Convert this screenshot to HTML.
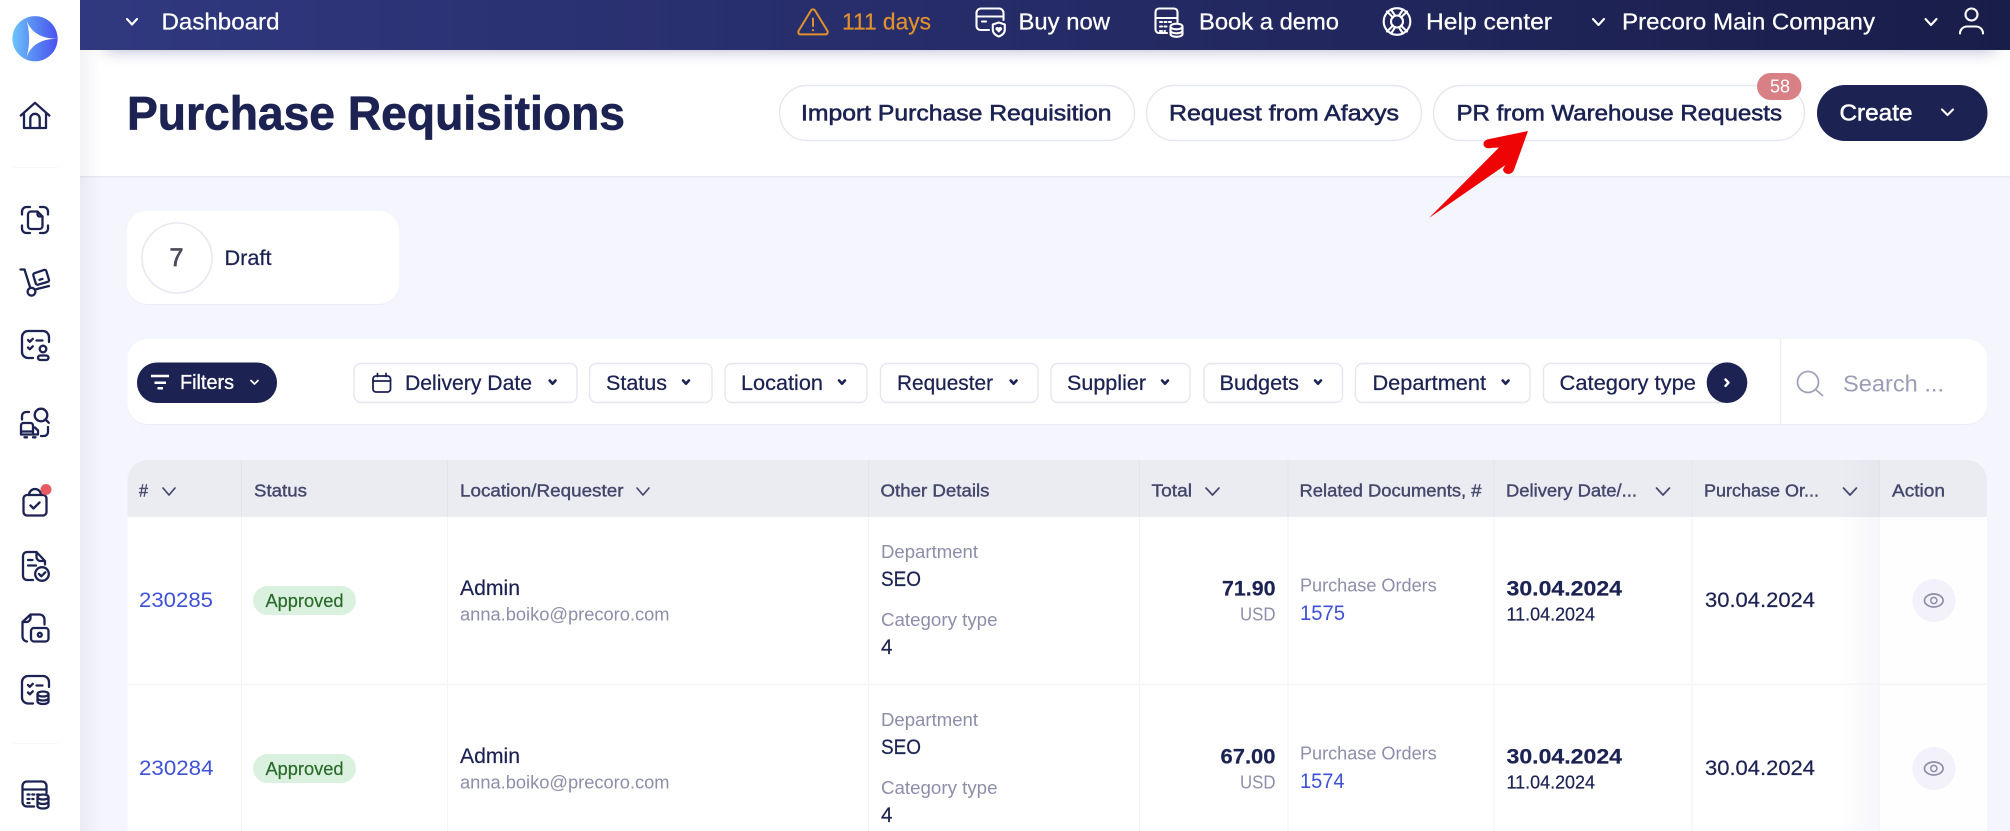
<!DOCTYPE html>
<html lang="en">
<head>
<meta charset="utf-8">
<title>Purchase Requisitions</title>
<style>
html,body{margin:0;padding:0;background:#f5f6fd;overflow:hidden}
svg{display:block}
text{font-family:"Liberation Sans",Arial,sans-serif;white-space:pre}
.w{fill:#fff;stroke:#fff;stroke-width:.25;font-size:23px}
.n{fill:#1c2252}
.btn{fill:#1c2252;stroke:#1c2252;stroke-width:.6;font-size:22.5px}
.chip{fill:#1c2252;stroke:#1c2252;stroke-width:.25;font-size:21.5px}
.th{fill:#44476b;stroke:#44476b;stroke-width:.4;font-size:17.5px}
.g{fill:#8c8eaa;font-size:18.3px}
.v{fill:#1c2252;stroke:#1c2252;stroke-width:.2;font-size:21px}
.b{fill:#1c2252;stroke:#1c2252;stroke-width:.2;font-weight:bold;font-size:21.5px}
.l{fill:#3f51d6;font-size:21.5px}
.ok{fill:#2a6a2a;stroke:#2a6a2a;stroke-width:.2;font-size:18.3px}
.ic{fill:none;stroke:#1c2252;stroke-width:2.3;stroke-linecap:round;stroke-linejoin:round}
.wi{fill:none;stroke:#fff;stroke-width:2.1;stroke-linecap:round;stroke-linejoin:round}
.chv{fill:none;stroke:#1c2252;stroke-width:1.8;stroke-linecap:round;stroke-linejoin:round}
.cc{fill:none;stroke:#1c2252;stroke-width:2.6;stroke-linecap:round;stroke-linejoin:round}
.hc{fill:none;stroke:#44476b;stroke-width:1.7;stroke-linecap:round;stroke-linejoin:round}
.chipbox{fill:#fff;stroke:#e5e6f0;stroke-width:1.4}
.pb{fill:#fff;stroke:#e6e7ee;stroke-width:1.4}
</style>
</head>
<body>
<svg xmlns="http://www.w3.org/2000/svg" width="2010" height="831" viewBox="0 0 2010 831">
<defs>
<linearGradient id="top" x1="0" x2="1" y1="0" y2="0"><stop offset="0" stop-color="#30387f"/><stop offset=".5" stop-color="#252b66"/><stop offset="1" stop-color="#191d49"/></linearGradient>
<linearGradient id="side" x1="0" x2="1" y1="0" y2="0"><stop offset="0" stop-color="#1c2252" stop-opacity=".055"/><stop offset="1" stop-color="#1c2252" stop-opacity="0"/></linearGradient>
<linearGradient id="logo" x1="0" x2="1" y1=".5" y2=".5"><stop offset="0" stop-color="#6cc4fb"/><stop offset=".45" stop-color="#5a8cf3"/><stop offset="1" stop-color="#4a52ef"/></linearGradient>
<linearGradient id="stick" x1="0" x2="1" y1="0" y2="0"><stop offset="0" stop-color="#f6f6fb" stop-opacity="0"/><stop offset="1" stop-color="#f6f6fb" stop-opacity="1"/></linearGradient>
<linearGradient id="stickh" x1="0" x2="1" y1="0" y2="0"><stop offset="0" stop-color="#e6e7ee" stop-opacity="0"/><stop offset="1" stop-color="#e6e7ee" stop-opacity="1"/></linearGradient>
<linearGradient id="red" x1="0" x2="1" y1="0" y2="1"><stop offset="0" stop-color="#e80000"/><stop offset="1" stop-color="#f40808"/></linearGradient>
<filter id="blur" x="-5%" y="-200%" width="110%" height="500%"><feGaussianBlur stdDeviation="8"/></filter>
<clipPath id="mainclip"><rect x="80" y="50" width="1930" height="781"/></clipPath>
</defs>

<rect width="2010" height="831" fill="#f5f6fd"/>
<rect x="80" y="50" width="1930" height="126" fill="#fff"/>
<rect x="80" y="176" width="1930" height="1.5" fill="#e8e9ef"/>
<rect x="80" y="50" width="22" height="781" fill="url(#side)"/>
<g clip-path="url(#mainclip)"><rect x="105" y="28" width="1890" height="22" fill="#1c2252" fill-opacity=".3" filter="url(#blur)"/></g>

<!-- top bar -->
<rect x="80" y="0" width="1930" height="50" fill="url(#top)"/>
<polyline points="127,19 132,24.5 137,19" class="wi"/>
<text x="161.5" y="29.5" class="w" textLength="118" lengthAdjust="spacingAndGlyphs">Dashboard</text>

<path d="M811 10.5a2.3 2.3 0 0 1 4 0L827.5 31a2.3 2.3 0 0 1-2 3.4H800.5a2.3 2.3 0 0 1-2-3.4Z M813 18.5v7.5 M813 30v.4" fill="none" stroke="#e0912d" stroke-width="2" stroke-linecap="round" stroke-linejoin="round"/>
<text x="842" y="29.5" font-size="23" fill="#e0912d" stroke="#e0912d" stroke-width=".2" textLength="89" lengthAdjust="spacingAndGlyphs">111 days</text>

<path class="wi" d="M989 30h-8.5a4 4 0 0 1-4-4V13a4.5 4.5 0 0 1 4.5-4.5h18a4.5 4.5 0 0 1 4.5 4.5v7 M976.5 16.5h26.5 M982 21.5h4"/>
<path class="wi" d="M998.8 22.5l6 2v5c0 3.5-2.500 5.700-6 7-3.500-1.300-6-3.500-6-7v-5Z"/>
<path d="M998.8 32.8l-3-3a1.800 1.800 0 0 1 3-2 1.800 1.800 0 0 1 3 2Z" fill="#fff"/>
<text x="1018.5" y="29.5" class="w" textLength="91.5" lengthAdjust="spacingAndGlyphs">Buy now</text>

<path class="wi" d="M1167 33h-8a3.500 3.500 0 0 1-3.500-3.500V12a3.500 3.500 0 0 1 3.500-3.500h15a3.500 3.500 0 0 1 3.500 3.500v10 M1155.500 18h22"/>
<path class="wi" stroke-dasharray="2 2.500" d="M1160 22h12 M1160 26.500h7 M1160 31h5"/>
<path class="wi" d="M1170.500 26.500c0-1.700 2.700-2.800 6-2.800s6 1.100 6 2.800v7.500c0 1.700-2.700 2.800-6 2.800s-6-1.100-6-2.800Z M1170.500 26.500c0 1.700 2.700 2.800 6 2.800s6-1.100 6-2.800 M1170.500 30.500c0 1.700 2.700 2.800 6 2.800s6-1.100 6-2.800"/>
<text x="1199" y="29.5" class="w" textLength="140" lengthAdjust="spacingAndGlyphs">Book a demo</text>

<g class="wi"><circle cx="1397" cy="21.5" r="13.300"/><circle cx="1397" cy="21.5" r="6"/><path d="M1387 11.500l6 6 M1391 9.500l4 6 M1407 11.500l-6 6 M1403 9.500l-4 6 M1387 31.500l6-6 M1391 33.500l4-6 M1407 31.500l-6-6 M1403 33.500l-4-6"/></g>
<text x="1426" y="29.5" class="w" textLength="126" lengthAdjust="spacingAndGlyphs">Help center</text>

<polyline points="1593,19 1598.5,25 1604,19" class="wi"/>
<text x="1622" y="29.5" class="w" textLength="253" lengthAdjust="spacingAndGlyphs">Precoro Main Company</text>
<polyline points="1925.5,19 1931,25 1936.5,19" class="wi"/>
<g class="wi"><circle cx="1971.5" cy="14.5" r="6"/><path d="M1960 33.500a7 7 0 0 1 7-7h9a7 7 0 0 1 7 7"/></g>

<!-- sidebar -->
<rect x="0" y="0" width="80" height="831" fill="#fff"/>
<circle cx="35" cy="38.7" r="22.6" fill="url(#logo)"/>
<path d="M25.300 16.500Q31 39 58 38.700Q31 38.400 25.300 61Q33 38.700 25.300 16.500Z" fill="#fff"/>
<rect x="13" y="167" width="45" height="1" fill="#f7f7fa"/>
<rect x="13" y="743" width="45" height="1" fill="#f7f7fa"/>

<g class="ic">
<path d="M20.800 115.500L35 102.800 49.300 115.500 M24 112.500V128h22V112.500 M30.300 128v-9.500a4.700 4.700 0 0 1 9.400 0V128"/>
<path d="M22 214.500v-3a4.500 4.500 0 0 1 4.500-4.500h3.500 M40 207h3.500a4.500 4.500 0 0 1 4.500 4.500v3 M48 225.500v3a4.500 4.500 0 0 1-4.500 4.500H40 M30 233h-3.500a4.500 4.500 0 0 1-4.500-4.500v-3"/>
<path d="M31 211.500h6.500l5 5v9.500a3 3 0 0 1-3 3H31a3 3 0 0 1-3-3v-11.500a3 3 0 0 1 3-3Z M37.500 211.500v3a2 2 0 0 0 2 2h3"/>
<path d="M20.500 269.500h4L30 287"/><circle cx="31.500" cy="291.700" r="3.900"/><path d="M36 289.300l13-3.300"/>
<path d="M34.500 273.200l9.500-3.300a1.800 1.800 0 0 1 2.300 1.200l2.600 8.500a1.800 1.800 0 0 1-1.200 2.300l-9.700 2.800a1.800 1.800 0 0 1-2.200-1.200l-2.500-8.200a1.800 1.800 0 0 1 1.200-2.100Z"/><path d="M39.500 279.800l3-.9"/>

<path d="M33 358h-5a6 6 0 0 1-6-6V337a6 6 0 0 1 6-6h15a6 6 0 0 1 6 6v5 M36.500 340.500h6 M28 340l1.800 1.800 3-3 M28 347.500l1.800 1.800 3-3"/>
<circle cx="43" cy="349" r="3.300"/><rect x="38" y="355.500" width="10.500" height="4.500" rx="2.200"/>

<path d="M22 419.500v-3.500a4 4 0 0 1 4-4h3 M48 427v5a4 4 0 0 1-4 4h-3"/>
<circle cx="41" cy="415" r="6.300"/><path d="M45.500 419.500l3.300 3.300"/>
<path d="M21 434.500v-9a2.500 2.500 0 0 1 2.500-2.500h7a2.500 2.500 0 0 1 2.500 2.500v9 M33 427.500h2l3 3v4h-17 M21 431.500h12 M24.500 437.300h2.500 M33 437.300h2.500"/>

<rect x="23.500" y="495" width="23" height="20.500" rx="3.500"/>
<path d="M29 495a6 6 0 0 1 12 0 M30.500 505.500l3 3 6-6"/>

<path d="M33 580h-6a4 4 0 0 1-4-4V556a4 4 0 0 1 4-4h9.500l8.500 9v3.500 M36.500 552v5a4 4 0 0 0 4 4h4.500 M28 560h4.500 M28 565.500h8"/>
<circle cx="42" cy="574" r="6.800"/><path d="M39 574l2.300 2.300 4-4"/>

<path d="M27 641.500a5 5 0 0 1-4.500-5V622l8-7.500h9a5 5 0 0 1 5 5v5 M30.500 614.500v3.500a4 4 0 0 1-4 4h-4"/>
<rect x="31" y="628" width="17.500" height="13.500" rx="3"/><circle cx="39.800" cy="634.800" r="2"/>

<path d="M33 703.500h-5a6 6 0 0 1-6-6V682a6 6 0 0 1 6-6h15a6 6 0 0 1 6 6v5 M36.500 685.500h6 M28 685l1.800 1.800 3-3 M28 692.500l1.800 1.800 3-3"/>
<path d="M37.500 694c0-1.500 2.500-2.500 5.500-2.500s5.500 1 5.500 2.500v7.500c0 1.500-2.500 2.500-5.500 2.500s-5.500-1-5.500-2.500Z M37.500 694c0 1.500 2.500 2.500 5.500 2.500s5.500-1 5.500-2.500 M37.500 698c0 1.500 2.500 2.500 5.500 2.500s5.500-1 5.500-2.500"/>

<path d="M34 806.500h-7a4.500 4.500 0 0 1-4.500-4.500V786a4.500 4.500 0 0 1 4.500-4.500h15a4.500 4.500 0 0 1 4.500 4.500v7 M22.500 789.500h24"/>
<path stroke-dasharray="2 2.800" d="M27.500 794.500h13 M27.500 799h6 M27.500 803h4"/>
<path d="M37.500 797c0-1.500 2.500-2.500 5.500-2.500s5.500 1 5.500 2.500v9c0 1.500-2.500 2.500-5.500 2.500s-5.500-1-5.500-2.500Z M37.500 797c0 1.500 2.500 2.500 5.500 2.500s5.500-1 5.500-2.500 M37.500 801.500c0 1.500 2.500 2.500 5.500 2.500s5.500-1 5.500-2.500"/>
</g>
<circle cx="46" cy="489.5" r="5.5" fill="#e85a62"/>

<!-- page header -->
<text x="127" y="129.5" font-size="47" font-weight="bold" class="n" stroke="#1c2252" stroke-width=".7" textLength="498" lengthAdjust="spacingAndGlyphs">Purchase Requisitions</text>

<rect x="779.5" y="85.5" width="355" height="55" rx="27.5" class="pb"/>
<text x="801" y="120.5" class="btn" textLength="310.5" lengthAdjust="spacingAndGlyphs">Import Purchase Requisition</text>
<rect x="1146.5" y="85.5" width="275" height="55" rx="27.5" class="pb"/>
<text x="1169" y="120.5" class="btn" textLength="230" lengthAdjust="spacingAndGlyphs">Request from Afaxys</text>
<rect x="1433.5" y="85.5" width="371" height="55" rx="27.5" class="pb"/>
<text x="1456.5" y="120.5" class="btn" textLength="325.5" lengthAdjust="spacingAndGlyphs">PR from Warehouse Requests</text>
<rect x="1757" y="73" width="44.5" height="27" rx="13.5" fill="#d98087"/>
<text x="1770" y="92.5" font-size="18" fill="#fff" textLength="20" lengthAdjust="spacingAndGlyphs">58</text>
<rect x="1817" y="85" width="170.5" height="56" rx="28" fill="#1c2252"/>
<text x="1839.5" y="120.5" font-size="23" fill="#fff" stroke="#fff" stroke-width=".5" textLength="73" lengthAdjust="spacingAndGlyphs">Create</text>
<polyline points="1942,109.5 1947.5,115 1953,109.5" class="wi"/>

<!-- arrow -->
<path d="M1528 131L1487 139.5Q1482 142 1484 146Q1486 149 1491 148L1499 147.5L1429 218L1505.5 165L1503 169Q1503 173 1508 174Q1512 174 1514 170Z" fill="url(#red)"/>

<!-- draft card -->
<rect x="127" y="212" width="272" height="93" rx="20" fill="#eceef6"/>
<rect x="127" y="211" width="272" height="93" rx="20" fill="#fff"/>
<circle cx="177" cy="258" r="35" fill="#fff" stroke="#e8e8f2" stroke-width="1.6"/>
<text x="169.5" y="266" font-size="25" fill="#4a4a5a" stroke="#4a4a5a" stroke-width=".7" textLength="14" lengthAdjust="spacingAndGlyphs">7</text>
<text x="224.5" y="265" class="chip" textLength="47" lengthAdjust="spacingAndGlyphs">Draft</text>

<!-- filter bar -->
<rect x="127.5" y="340" width="1859.5" height="85" rx="20" fill="#eceef6"/>
<rect x="127.5" y="339" width="1859.5" height="85" rx="20" fill="#fff"/>
<rect x="1780" y="339" width="1.3" height="85" fill="#eeeff5"/>
<rect x="137" y="362.5" width="140" height="40.5" rx="20" fill="#1c2252"/>
<path d="M151 376h18 M154.5 382.800h11.500 M157.500 388.300h5.500" stroke="#fff" stroke-width="2.5" fill="none"/>
<text x="180" y="389" font-size="20.5" fill="#fff" stroke="#fff" stroke-width=".3" textLength="54" lengthAdjust="spacingAndGlyphs">Filters</text>
<polyline points="251,380.5 254.5,384 258,380.5" fill="none" stroke="#fff" stroke-width="1.7" stroke-linecap="round" stroke-linejoin="round"/>

<rect x="354" y="363.5" width="223" height="39" rx="7" class="chipbox"/>
<g class="chv"><rect x="373" y="376" width="17.5" height="16" rx="3"/><path d="M373 381h17.5 M377.5 373.5v3 M386 373.5v3"/></g>
<text x="405" y="390" class="chip" textLength="127" lengthAdjust="spacingAndGlyphs">Delivery Date</text>
<polyline points="549.7,380.5 552.6,383.7 555.5,380.5" class="cc"/>

<rect x="589.5" y="363.5" width="122.5" height="39" rx="7" class="chipbox"/>
<text x="606" y="390" class="chip" textLength="61" lengthAdjust="spacingAndGlyphs">Status</text>
<polyline points="683.1,380.5 686,383.7 688.9,380.5" class="cc"/>

<rect x="725" y="363.5" width="142" height="39" rx="7" class="chipbox"/>
<text x="741" y="390" class="chip" textLength="82" lengthAdjust="spacingAndGlyphs">Location</text>
<polyline points="839.1,380.5 842,383.7 844.9,380.5" class="cc"/>

<rect x="880.5" y="363.5" width="157.5" height="39" rx="7" class="chipbox"/>
<text x="897" y="390" class="chip" textLength="96" lengthAdjust="spacingAndGlyphs">Requester</text>
<polyline points="1010.7,380.5 1013.6,383.7 1016.5,380.5" class="cc"/>

<rect x="1051" y="363.5" width="139" height="39" rx="7" class="chipbox"/>
<text x="1067" y="390" class="chip" textLength="79" lengthAdjust="spacingAndGlyphs">Supplier</text>
<polyline points="1162.1,380.5 1165,383.7 1167.9,380.5" class="cc"/>

<rect x="1204" y="363.5" width="138.5" height="39" rx="7" class="chipbox"/>
<text x="1219.5" y="390" class="chip" textLength="79.5" lengthAdjust="spacingAndGlyphs">Budgets</text>
<polyline points="1315.1,380.5 1318,383.7 1320.9,380.5" class="cc"/>

<rect x="1355.5" y="363.5" width="174.5" height="39" rx="7" class="chipbox"/>
<text x="1372.5" y="390" class="chip" textLength="113.5" lengthAdjust="spacingAndGlyphs">Department</text>
<polyline points="1502.7,380.5 1505.6,383.7 1508.5,380.5" class="cc"/>

<rect x="1543.5" y="363.5" width="190" height="39" rx="7" class="chipbox"/>
<text x="1559.5" y="390" class="chip" textLength="136.5" lengthAdjust="spacingAndGlyphs">Category type</text>
<circle cx="1727" cy="382.7" r="20.3" fill="#1c2252"/>
<polyline points="1725.5,379.5 1728.5,382.7 1725.5,385.9" fill="none" stroke="#fff" stroke-width="2.4" stroke-linecap="round" stroke-linejoin="round"/>

<circle cx="1808" cy="382" r="10.5" fill="none" stroke="#a0a3b8" stroke-width="1.8"/>
<path d="M1815.5 389.5l7 6" stroke="#a0a3b8" stroke-width="1.8" stroke-linecap="round"/>
<text x="1843" y="391.5" font-size="23" fill="#9a9db5" textLength="101" lengthAdjust="spacingAndGlyphs">Search ...</text>

<!-- table -->
<rect x="127.5" y="500" width="1859.5" height="331" fill="#fff"/>
<path d="M127.5 517V480a20 20 0 0 1 20-20H1967a20 20 0 0 1 20 20V517Z" fill="#ebecf2"/>
<rect x="1840" y="460" width="39" height="57" fill="url(#stickh)"/>
<rect x="1840" y="517" width="39" height="314" fill="url(#stick)"/>
<rect x="1879" y="517" width="108" height="314" fill="#fefefe"/>
<g fill="#e2e3eb">
<rect x="241" y="460" width="1" height="57"/><rect x="447" y="460" width="1" height="57"/><rect x="868" y="460" width="1" height="57"/><rect x="1139" y="460" width="1" height="57"/><rect x="1287.5" y="460" width="1" height="57"/><rect x="1493.5" y="460" width="1" height="57"/><rect x="1691.5" y="460" width="1" height="57"/><rect x="1879" y="460" width="1" height="57"/>
</g>
<g fill="#f3f3f8">
<rect x="241" y="517" width="1" height="314"/><rect x="447" y="517" width="1" height="314"/><rect x="868" y="517" width="1" height="314"/><rect x="1139" y="517" width="1" height="314"/><rect x="1287.5" y="517" width="1" height="314"/><rect x="1493.5" y="517" width="1" height="314"/><rect x="1691.5" y="517" width="1" height="314"/><rect x="1879" y="517" width="1" height="314"/>
<rect x="127.5" y="683.5" width="1859.5" height="1.5"/>
</g>

<text x="139" y="496.5" class="th" textLength="9" lengthAdjust="spacingAndGlyphs">#</text>
<polyline points="163,488 169,495 175,488" class="hc"/>
<text x="254" y="496.5" class="th" textLength="53" lengthAdjust="spacingAndGlyphs">Status</text>
<text x="460" y="496.5" class="th" textLength="163.5" lengthAdjust="spacingAndGlyphs">Location/Requester</text>
<polyline points="637,488 643,495 649,488" class="hc"/>
<text x="880.5" y="496.5" class="th" textLength="109" lengthAdjust="spacingAndGlyphs">Other Details</text>
<text x="1151.5" y="496.5" class="th" textLength="40.5" lengthAdjust="spacingAndGlyphs">Total</text>
<polyline points="1206,488 1212.5,495 1219,488" class="hc"/>
<text x="1299.5" y="496.5" class="th" textLength="182" lengthAdjust="spacingAndGlyphs">Related Documents, #</text>
<text x="1506" y="496.5" class="th" textLength="131" lengthAdjust="spacingAndGlyphs">Delivery Date/...</text>
<polyline points="1656.5,488 1663,495 1669.5,488" class="hc"/>
<text x="1704" y="496.5" class="th" textLength="115" lengthAdjust="spacingAndGlyphs">Purchase Or...</text>
<polyline points="1843.5,488 1850,495 1856.5,488" class="hc"/>
<text x="1892" y="496.5" class="th" textLength="53" lengthAdjust="spacingAndGlyphs">Action</text>

<!-- row 1 -->
<text x="139" y="607" class="l" textLength="74" lengthAdjust="spacingAndGlyphs">230285</text>
<rect x="253" y="586" width="103" height="29" rx="14.5" fill="#dbf1e0"/>
<text x="265.5" y="607" class="ok" textLength="78" lengthAdjust="spacingAndGlyphs">Approved</text>
<text x="460" y="595" class="v" textLength="60" lengthAdjust="spacingAndGlyphs">Admin</text>
<text x="460" y="620.5" class="g" textLength="209.5" lengthAdjust="spacingAndGlyphs">anna.boiko@precoro.com</text>
<text x="881" y="557.8" class="g" textLength="97" lengthAdjust="spacingAndGlyphs">Department</text>
<text x="881" y="586" class="v" textLength="40" lengthAdjust="spacingAndGlyphs">SEO</text>
<text x="881" y="625.8" class="g" textLength="116.5" lengthAdjust="spacingAndGlyphs">Category type</text>
<text x="881" y="654" class="v" textLength="11.5" lengthAdjust="spacingAndGlyphs">4</text>
<text x="1222" y="595.7" class="b" textLength="53.5" lengthAdjust="spacingAndGlyphs">71.90</text>
<text x="1240" y="620.7" class="g" textLength="35.5" lengthAdjust="spacingAndGlyphs">USD</text>
<text x="1300" y="591.7" class="g" textLength="136.7" lengthAdjust="spacingAndGlyphs">Purchase Orders</text>
<text x="1300" y="620" class="l" textLength="45" lengthAdjust="spacingAndGlyphs">1575</text>
<text x="1506.5" y="595.7" class="b" textLength="115.5" lengthAdjust="spacingAndGlyphs">30.04.2024</text>
<text x="1506.5" y="620.7" class="v" style="font-size:18.3px" textLength="88.5" lengthAdjust="spacingAndGlyphs">11.04.2024</text>
<text x="1705" y="607" class="v" textLength="110" lengthAdjust="spacingAndGlyphs">30.04.2024</text>
<circle cx="1934" cy="600.5" r="21.5" fill="#f3f2fb"/>
<ellipse cx="1933.8" cy="600.5" rx="9.3" ry="6.5" fill="none" stroke="#8c8eaa" stroke-width="1.7"/>
<circle cx="1933.8" cy="600.5" r="3.1" fill="none" stroke="#8c8eaa" stroke-width="1.5"/>

<!-- row 2 -->
<text x="139" y="775" class="l" textLength="74.5" lengthAdjust="spacingAndGlyphs">230284</text>
<rect x="253" y="754" width="103" height="29" rx="14.5" fill="#dbf1e0"/>
<text x="265.5" y="775" class="ok" textLength="78" lengthAdjust="spacingAndGlyphs">Approved</text>
<text x="460" y="763" class="v" textLength="60" lengthAdjust="spacingAndGlyphs">Admin</text>
<text x="460" y="788.5" class="g" textLength="209.5" lengthAdjust="spacingAndGlyphs">anna.boiko@precoro.com</text>
<text x="881" y="725.8" class="g" textLength="97" lengthAdjust="spacingAndGlyphs">Department</text>
<text x="881" y="754" class="v" textLength="40" lengthAdjust="spacingAndGlyphs">SEO</text>
<text x="881" y="793.8" class="g" textLength="116.5" lengthAdjust="spacingAndGlyphs">Category type</text>
<text x="881" y="822" class="v" textLength="11.5" lengthAdjust="spacingAndGlyphs">4</text>
<text x="1220.5" y="763.7" class="b" textLength="55" lengthAdjust="spacingAndGlyphs">67.00</text>
<text x="1240" y="788.7" class="g" textLength="35.5" lengthAdjust="spacingAndGlyphs">USD</text>
<text x="1300" y="759.7" class="g" textLength="136.7" lengthAdjust="spacingAndGlyphs">Purchase Orders</text>
<text x="1300" y="788" class="l" textLength="44.5" lengthAdjust="spacingAndGlyphs">1574</text>
<text x="1506.5" y="763.7" class="b" textLength="115.5" lengthAdjust="spacingAndGlyphs">30.04.2024</text>
<text x="1506.5" y="788.7" class="v" style="font-size:18.3px" textLength="88.5" lengthAdjust="spacingAndGlyphs">11.04.2024</text>
<text x="1705" y="775" class="v" textLength="110" lengthAdjust="spacingAndGlyphs">30.04.2024</text>
<circle cx="1934" cy="768.5" r="21.5" fill="#f3f2fb"/>
<ellipse cx="1933.8" cy="768.5" rx="9.3" ry="6.5" fill="none" stroke="#8c8eaa" stroke-width="1.7"/>
<circle cx="1933.8" cy="768.5" r="3.1" fill="none" stroke="#8c8eaa" stroke-width="1.5"/>
</svg>
</body>
</html>
